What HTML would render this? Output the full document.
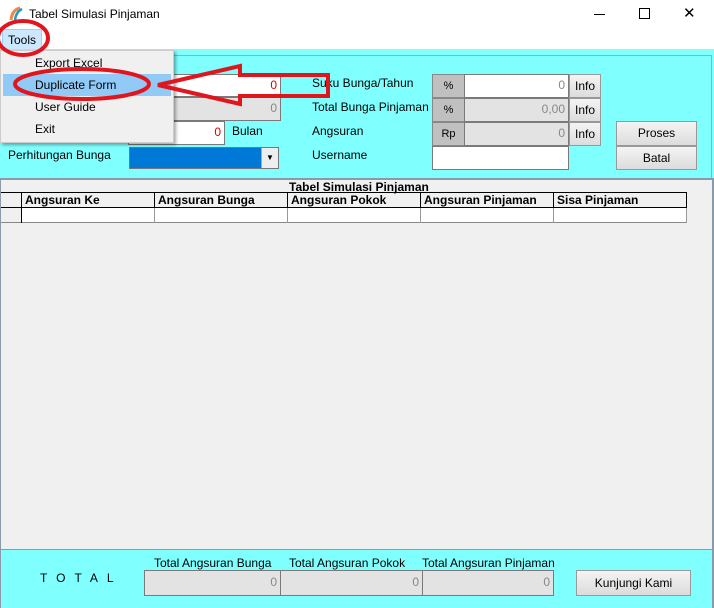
<!DOCTYPE html>
<html><head><style>
*{margin:0;padding:0;box-sizing:border-box}
body{width:714px;height:608px;overflow:hidden;background:#fff;font-family:"Liberation Sans",sans-serif;font-size:12px;position:relative;color:#000}
.a{position:absolute}
.in{position:absolute;border:1px solid #7a7a7a;background:#fff;text-align:right;padding-right:3px;line-height:20px;font-size:12px}
.g{background:#e3e3e3;color:#888}
.btn{position:absolute;background:linear-gradient(#f4f4f4,#dcdcdc);border:1px solid #999;text-align:center;font-size:12px}
.pc{position:absolute;background:#c0c0c0;border:1px solid #888;text-align:center;line-height:22px;font-size:11px}
.lb{position:absolute;font-size:12px}
.th{position:absolute;top:193px;height:15px;border-left:1px solid #000;font-weight:bold;font-size:12px;padding-left:3px;line-height:15px}
</style></head><body>
<div class="a" style="left:8px;top:6px;width:14px;height:16px">
<svg width="16" height="16"><path d="M12 2 Q4 4 3 14" stroke="#e84" stroke-width="3" fill="none"/><path d="M14 3 Q8 6 7 14" stroke="#29c" stroke-width="2.5" fill="none"/></svg></div>
<div class="a" style="left:29px;top:7px;font-size:12px">Tabel Simulasi Pinjaman</div>
<div class="a" style="left:594px;top:14px;width:11px;height:1px;background:#000"></div>
<div class="a" style="left:639px;top:8px;width:11px;height:11px;border:1px solid #000"></div>
<div class="a" style="left:683px;top:7px;font-size:15px;line-height:14px">✕</div>
<div class="a" style="left:2px;top:29px;width:40px;height:21px;background:#cce8ff;border:1px solid #99d1ff"></div>
<div class="a" style="left:8px;top:33px;font-size:12px">Tools</div>
<div class="a" style="left:0;top:49px;width:714px;height:129px;background:#80ffff"></div>
<div class="a" style="left:0;top:55px;width:712px;height:1px;background:#9ab"></div>
<div class="a" style="left:711px;top:55px;width:1px;height:125px;background:#9ab"></div>
<div class="in" style="left:128px;top:74px;width:153px;height:23px;color:#d00">0</div>
<div class="in g" style="left:128px;top:97px;width:153px;height:24px">0</div>
<div class="in" style="left:128px;top:121px;width:97px;height:24px;color:#d00">0</div>
<div class="lb" style="left:232px;top:124px">Bulan</div>
<div class="lb" style="left:8px;top:148px">Perhitungan Bunga</div>
<div class="a" style="left:129px;top:147px;width:150px;height:22px;border:1px solid #777;background:#0078d7"></div>
<div class="a" style="left:261px;top:148px;width:17px;height:20px;background:#eee;border-left:1px solid #aaa;font-size:8px;text-align:center;line-height:20px">▼</div>
<div class="lb" style="left:312px;top:76px">Suku Bunga/Tahun</div>
<div class="lb" style="left:312px;top:100px">Total Bunga Pinjaman</div>
<div class="lb" style="left:312px;top:124px">Angsuran</div>
<div class="lb" style="left:312px;top:148px">Username</div>
<div class="pc" style="left:432px;top:74px;width:33px;height:24px">%</div>
<div class="pc" style="left:432px;top:98px;width:33px;height:24px">%</div>
<div class="pc" style="left:432px;top:122px;width:33px;height:24px">Rp</div>
<div class="in" style="left:464px;top:74px;width:105px;height:24px;color:#888">0</div>
<div class="in g" style="left:464px;top:98px;width:105px;height:24px">0,00</div>
<div class="in g" style="left:464px;top:122px;width:105px;height:24px">0</div>
<div class="in" style="left:432px;top:146px;width:137px;height:24px"></div>
<div class="btn" style="left:569px;top:74px;width:32px;height:24px;line-height:22px">Info</div>
<div class="btn" style="left:569px;top:98px;width:32px;height:24px;line-height:22px">Info</div>
<div class="btn" style="left:569px;top:122px;width:32px;height:24px;line-height:22px">Info</div>
<div class="btn" style="left:616px;top:121px;width:81px;height:25px;line-height:23px">Proses</div>
<div class="btn" style="left:616px;top:146px;width:81px;height:24px;line-height:22px">Batal</div>
<div class="a" style="left:0;top:178px;width:714px;height:371px;background:#f0f0f0;border-top:2px solid #8a9aa8;border-left:1px solid #8a9aa8;border-right:2px solid #8a9aa8"></div>
<div class="a" style="left:289px;top:180px;font-weight:bold;font-size:12px">Tabel Simulasi Pinjaman</div>
<div class="a" style="left:1px;top:192px;width:686px;height:1px;background:#000"></div>
<div class="a" style="left:1px;top:207px;width:686px;height:1px;background:#000"></div>
<div class="a" style="left:21px;top:208px;width:666px;height:15px;background:#fff;border-bottom:1px solid #888"></div>
<div class="a" style="left:1px;top:222px;width:21px;height:1px;background:#888"></div>
<div class="th" style="left:21px;width:133px">Angsuran Ke</div>
<div class="th" style="left:154px;width:133px">Angsuran Bunga</div>
<div class="th" style="left:287px;width:133px">Angsuran Pokok</div>
<div class="th" style="left:420px;width:133px">Angsuran Pinjaman</div>
<div class="th" style="left:553px;width:134px;border-right:1px solid #000">Sisa Pinjaman</div>
<div class="a" style="left:21px;top:208px;width:1px;height:15px;background:#000"></div>
<div class="a" style="left:154px;top:208px;width:1px;height:15px;background:#999"></div>
<div class="a" style="left:287px;top:208px;width:1px;height:15px;background:#999"></div>
<div class="a" style="left:420px;top:208px;width:1px;height:15px;background:#999"></div>
<div class="a" style="left:553px;top:208px;width:1px;height:15px;background:#999"></div>
<div class="a" style="left:686px;top:208px;width:1px;height:15px;background:#999"></div>
<div class="a" style="left:0;top:549px;width:714px;height:59px;background:#80ffff;border-top:1px solid #8a9aa8;border-left:1px solid #8a9aa8;border-right:2px solid #8a9aa8"></div>
<div class="a" style="left:40px;top:571px;font-size:12px;letter-spacing:9px">TOTAL</div>
<div class="lb" style="left:154px;top:556px">Total Angsuran Bunga</div>
<div class="lb" style="left:289px;top:556px">Total Angsuran Pokok</div>
<div class="lb" style="left:422px;top:556px">Total Angsuran Pinjaman</div>
<div class="in g" style="left:144px;top:570px;width:137px;height:26px;line-height:22px">0</div>
<div class="in g" style="left:280px;top:570px;width:143px;height:26px;line-height:22px">0</div>
<div class="in g" style="left:422px;top:570px;width:132px;height:26px;line-height:22px">0</div>
<div class="btn" style="left:576px;top:570px;width:115px;height:26px;line-height:24px">Kunjungi Kami</div>
<div class="a" style="left:0;top:50px;width:174px;height:93px;background:#f0f0f0;border:1px solid #ccc;box-shadow:2px 2px 3px rgba(0,0,0,.35)"></div>
<div class="a" style="left:3px;top:74px;width:168px;height:22px;background:#91c9f7"></div>
<div class="a" style="left:35px;top:56px">Export Excel</div>
<div class="a" style="left:35px;top:78px">Duplicate Form</div>
<div class="a" style="left:35px;top:100px">User Guide</div>
<div class="a" style="left:35px;top:122px">Exit</div>
<svg class="a" style="left:0;top:0" width="714" height="608">
<ellipse cx="23" cy="38" rx="25" ry="17" stroke="#e0161e" stroke-width="4" fill="none"/>
<ellipse cx="82" cy="84" rx="67" ry="15" stroke="#e0161e" stroke-width="4" fill="none"/>
<polygon points="158,85 240,66 240,75 328,75 328,96 240,96 240,104" stroke="#e0161e" stroke-width="4" fill="none" stroke-linejoin="miter"/>
</svg>
</body></html>
